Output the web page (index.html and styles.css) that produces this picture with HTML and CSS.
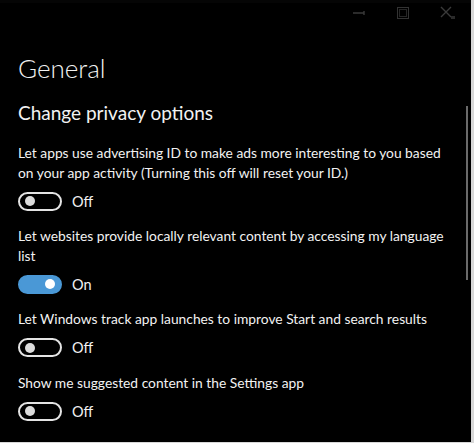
FILE: index.html
```html
<!DOCTYPE html>
<html lang="en">
<head>
  <meta charset="UTF-8">
  <title>Settings - General</title>
  <link rel="stylesheet" href="styles.css">
</head>
<body>
  <div class="window">
    <div class="titlebar">
      <span class="ctl">
        <svg width="14" height="10" viewBox="0 0 14 10"><path d="M1 5H12M12 3V7" stroke="#3a3a3a" stroke-width="1.4" fill="none"/></svg>
      </span>
      <span class="ctl">
        <svg width="14" height="14" viewBox="0 0 14 14"><rect x="1.5" y="1.5" width="11" height="11" stroke="#333" fill="none"/><rect x="3.5" y="3.5" width="7" height="7" stroke="#262626" fill="none"/></svg>
      </span>
      <span class="ctl">
        <svg width="16" height="14" viewBox="0 0 16 14"><path d="M1 1L11 11M11 1L1 11" stroke="#3a3a3a" stroke-width="1.4"/><rect x="11" y="10" width="4" height="3" fill="#2a2a2a"/></svg>
      </span>
    </div>

    <div class="content">
      <h1>General</h1>
      <h2>Change privacy options</h2>

      <div class="setting">
        <p>Let apps use advertising ID to make ads more interesting to you based on your app activity (Turning this off will reset your ID.)</p>
        <div class="toggle-row">
          <span class="toggle"><span class="knob"></span></span>
          <span class="state">Off</span>
        </div>
      </div>

      <div class="setting">
        <p>Let websites provide locally relevant content by accessing my language list</p>
        <div class="toggle-row">
          <span class="toggle on"><span class="knob"></span></span>
          <span class="state">On</span>
        </div>
      </div>

      <div class="setting">
        <p>Let Windows track app launches to improve Start and search results</p>
        <div class="toggle-row">
          <span class="toggle"><span class="knob"></span></span>
          <span class="state">Off</span>
        </div>
      </div>

      <div class="setting">
        <p>Show me suggested content in the Settings app</p>
        <div class="toggle-row">
          <span class="toggle"><span class="knob"></span></span>
          <span class="state">Off</span>
        </div>
      </div>
    </div>

    <div class="scrollbar"></div>
  </div>
</body>
</html>
```

FILE: styles.css
```css
* {
  margin: 0;
  padding: 0;
  box-sizing: border-box;
}

body {
  background: #d8d8d8;
  font-family: Lato, 'Noto Sans', sans-serif;
  color: #f2f2f2;
  width: 474px;
  height: 443px;
  overflow: hidden;
}

.window {
  position: relative;
  width: 471px;
  height: 442px;
  background: #000;
  border-top: 3px solid #050505;
}

.titlebar {
  display: flex;
  justify-content: flex-end;
  align-items: center;
  height: 20px;
  padding-right: 15px;
  gap: 28px;
}

.ctl {
  display: flex;
  align-items: center;
  width: 16px;
}

.content {
  padding: 30px 0 0 18px;
}

h1 {
  font-size: 26px;
  font-weight: 300;
  line-height: 30px;
  margin-bottom: 18px;
}

h2 {
  font-size: 19px;
  font-weight: 400;
  line-height: 24px;
  margin-bottom: 18px;
}

.setting p {
  font-size: 13.8px;
  line-height: 19.5px;
  max-width: 440px;
}

.toggle-row {
  display: flex;
  align-items: center;
  gap: 10px;
  height: 20px;
  margin: 9px 0 15px;
}

.toggle {
  display: flex;
  align-items: center;
  width: 44px;
  height: 19px;
  border: 2px solid #e4e4e4;
  border-radius: 10px;
  padding: 0 5px;
}

.knob {
  width: 10px;
  height: 10px;
  border-radius: 50%;
  background: #dcdcdc;
}

.toggle.on {
  background: #4a98d6;
  border-color: #4a98d6;
  justify-content: flex-end;
}

.toggle.on .knob {
  background: #fff;
}

.state {
  font-size: 14.5px;
}

.scrollbar {
  position: absolute;
  right: 3px;
  top: 103px;
  width: 2px;
  height: 174px;
  background: #6a6a6a;
}
```
